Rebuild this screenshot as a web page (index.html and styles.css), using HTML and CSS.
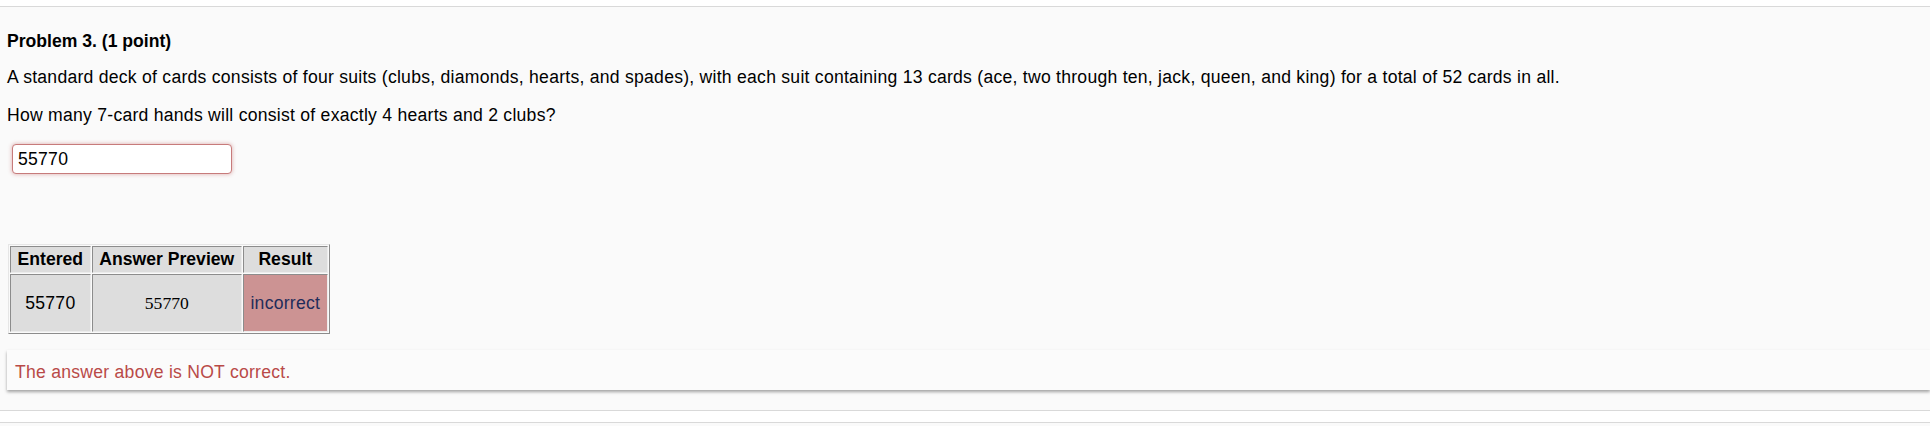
FILE: index.html
```html
<!DOCTYPE html>
<html lang="en">
<head>
  <meta charset="UTF-8">
  <meta name="viewport" content="width=device-width, initial-scale=1.0">
  <title>Problem 3</title>
  <link rel="stylesheet" href="styles.css">
</head>
<body>
  <div class="problem">
    <div class="problem-title">Problem 3. (1 point)</div>
    <p class="problem-text">A standard deck of cards consists of four suits (clubs, diamonds, hearts, and spades), with each suit containing 13 cards (ace, two through ten, jack, queen, and king) for a total of 52 cards in all.</p>
    <p class="problem-text question">How many 7-card hands will consist of exactly 4 hearts and 2 clubs?</p>
    <input class="answer-input" type="text" value="55770">
    <table class="attempt-results">
      <tr>
        <th>Entered</th>
        <th>Answer Preview</th>
        <th>Result</th>
      </tr>
      <tr>
        <td>55770</td>
        <td class="preview">55770</td>
        <td class="result-error">incorrect</td>
      </tr>
    </table>
    <div class="attempt-message">The answer above is NOT correct.</div>
  </div>
  <div class="next-panel"></div>
</body>
</html>
```

FILE: styles.css
```css
    body {
      margin: 0;
      font-family: "Liberation Sans", Arial, sans-serif;
      font-size: 17.6px;
      line-height: 22px;
      letter-spacing: 0.25px;
      background: #fff;
      color: #000;
      overflow: hidden;
    }
    .problem {
      margin-top: 6px;
      border-top: 1px solid #d9d9d9;
      border-bottom: 1px solid #d9d9d9;
      background: #fafafa;
      padding: 23px 0 20px;
    }
    .problem-title {
      font-weight: bold;
      letter-spacing: 0;
      padding-left: 7px;
      margin-bottom: 14px;
    }
    .problem-text {
      margin: 0 0 16px;
      padding-left: 7px;
      white-space: nowrap;
    }
    .question {
      margin-bottom: 18px;
    }
    .answer-input {
      display: block;
      box-sizing: border-box;
      margin: 0 0 70px 12px;
      width: 220px;
      height: 30px;
      padding: 0 5px;
      font-family: "Liberation Sans", Arial, sans-serif;
      font-size: 17.6px;
      letter-spacing: 0.25px;
      color: #000;
      background: #fff;
      border: 1px solid #c77b7b;
      border-radius: 4px;
      box-shadow: 0 0 4px rgba(185, 74, 72, 0.45);
      outline: none;
    }
    .attempt-results {
      margin: 0 0 16px 8px;
      border-collapse: separate;
      border-spacing: 1px;
      border-width: 1px;
      border-style: solid;
      border-color: #e6e6e6 #8c8c8c #8c8c8c #e6e6e6;
    }
    .attempt-results th,
    .attempt-results td {
      background: #dddddd;
      text-align: center;
      border-width: 1px;
      border-style: solid;
      border-color: #8c8c8c #ececec #ececec #8c8c8c;
      padding: 1px 6.6px 2px;
    }
    .attempt-results th {
      letter-spacing: 0;
    }
    .attempt-results td {
      padding: 17px 6.6px;
    }
    .attempt-results .preview {
      font-family: "Liberation Serif", "Times New Roman", serif;
      letter-spacing: 0;
    }
    .attempt-results .result-error {
      background: #cc9393;
      color: #1f2c5a;
    }
    .attempt-message {
      margin-left: 7px;
      padding: 11px 8px 7px;
      background: #fbfbfb;
      color: #b94a48;
      box-shadow: 0 2px 3px rgba(0, 0, 0, 0.35);
    }
    .next-panel {
      margin-top: 11px;
      border-top: 1px solid #d9d9d9;
      background: #fafafa;
      height: 4px;
    }
```
